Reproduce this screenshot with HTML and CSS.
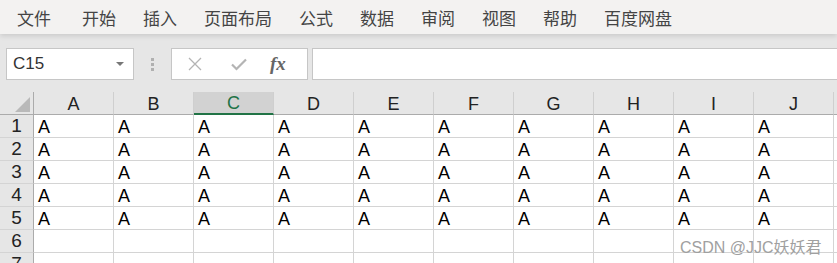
FILE: index.html
```html
<!DOCTYPE html>
<html lang="zh-CN">
<head>
  <meta charset="UTF-8" />
  <title>Excel</title>
  <link rel="stylesheet" href="styles.css">
</head>
<body>
  <div class="menu">
    <span class="menu-item first">文件</span>
    <span class="menu-item">开始</span>
    <span class="menu-item">插入</span>
    <span class="menu-item">页面布局</span>
    <span class="menu-item">公式</span>
    <span class="menu-item">数据</span>
    <span class="menu-item">审阅</span>
    <span class="menu-item">视图</span>
    <span class="menu-item">帮助</span>
    <span class="menu-item">百度网盘</span>
  </div>

  <div class="toolbar">
    <div class="namebox">
      <span>C15</span>
      <span class="caret"></span>
    </div>
    <div class="dots"><i></i><i></i><i></i></div>
    <div class="fbtns">
      <svg class="ico" width="16" height="16" viewBox="0 0 16 16">
        <path d="M2 2 L14 14 M14 2 L2 14" stroke="#b4b4b4" stroke-width="1.3" fill="none" />
      </svg>
      <svg class="ico" width="18" height="16" viewBox="0 0 18 16">
        <path d="M2 8.5 L6.5 13 L16 3.5" stroke="#b4b4b4" stroke-width="2.2" fill="none" />
      </svg>
      <span class="fx">fx</span>
    </div>
    <div class="finput"></div>
  </div>

  <div class="sheet">
    <div class="grid" id="grid"></div>
    <div class="mark">CSDN @JJC妖妖君</div>
  </div>

  <script>
    const grid = document.getElementById('grid');
    const cols = ['A', 'B', 'C', 'D', 'E', 'F', 'G', 'H', 'I', 'J', ''];
    let html = '<div class="hd corner"><span class="tri"></span></div>';
    cols.forEach(c => {
      html += `<div class="hd col${c === 'C' ? ' sel' : ''}">${c}</div>`;
    });
    for (let r = 1; r <= 7; r++) {
      html += `<div class="hd row">${r}</div>`;
      cols.forEach((c, i) => {
        const txt = r <= 5 && i < 10 ? 'A' : '';
        html += `<div class="cell">${txt}</div>`;
      });
    }
    grid.innerHTML = html;
  </script>
</body>
</html>
```

FILE: styles.css
```css
* {
  box-sizing: border-box;
}
body {
  margin: 0;
  width: 837px;
  height: 263px;
  overflow: hidden;
  background: #e6e6e6;
  font-family: "Liberation Sans", "Noto Sans CJK SC", sans-serif;
  color: #000;
}
.menu {
  height: 34px;
  background: #f3f2f1;
  display: flex;
  align-items: center;
  gap: 27px;
  padding-left: 17px;
  font-family: "Noto Sans CJK SC", sans-serif;
  font-size: 17px;
  color: #444;
  position: relative;
  z-index: 1;
  box-shadow: 0 2px 5px rgba(0, 0, 0, 0.12);
}
.menu-item.first {
  margin-right: 4px;
}
.toolbar {
  height: 58px;
  display: flex;
  padding: 14px 0 0 6px;
}
.namebox {
  width: 128px;
  height: 32px;
  background: #fff;
  border: 1px solid #c6c6c6;
  display: flex;
  align-items: center;
  justify-content: space-between;
  padding: 0 9px 0 6px;
  font-size: 17px;
  color: #333;
}
.caret {
  width: 0;
  height: 0;
  border-left: 4px solid transparent;
  border-right: 4px solid transparent;
  border-top: 4px solid #777;
}
.dots {
  width: 37px;
  display: flex;
  flex-direction: column;
  align-items: center;
  justify-content: center;
  gap: 2px;
  height: 32px;
}
.dots i {
  width: 3px;
  height: 3px;
  background: #b0b0b0;
}
.fbtns {
  width: 137px;
  height: 32px;
  background: #fff;
  border: 1px solid #c6c6c6;
  display: flex;
  align-items: center;
  padding-left: 15px;
  gap: 27px;
}
.fx {
  font-family: "Liberation Serif", serif;
  font-style: italic;
  font-weight: bold;
  font-size: 19px;
  color: #666;
  margin-left: -5px;
}
.finput {
  flex: 1;
  height: 32px;
  margin-left: 4px;
  margin-right: -10px;
  background: #fff;
  border: 1px solid #c6c6c6;
}
.sheet {
  position: relative;
}
.grid {
  display: grid;
  grid-template-columns: 34px repeat(11, 80px);
  grid-auto-rows: 23px;
}
.hd {
  background: #e6e6e6;
  color: #222;
  font-size: 18px;
  display: flex;
  align-items: center;
  justify-content: center;
  border-right: 1px solid #cfcfcf;
  border-bottom: 1px solid #c6c6c6;
}
.hd.row {
  font-size: 19px;
  border-right: 1px solid #ababab;
  border-bottom: 1px solid #d4d4d4;
}
.hd.col {
  border-bottom: 1px solid #ababab;
  padding-top: 2px;
}
.hd.sel {
  background: #d2d2d2;
  color: #217346;
  border-bottom: 2px solid #217346;
}
.corner {
  position: relative;
  border-right: 1px solid #ababab;
  border-bottom: 1px solid #ababab;
}
.tri {
  position: absolute;
  right: 3px;
  bottom: 2px;
  width: 0;
  height: 0;
  border-left: 15px solid transparent;
  border-bottom: 15px solid #b9b9b9;
}
.cell {
  background: #fff;
  border-right: 1px solid #d4d4d4;
  border-bottom: 1px solid #d4d4d4;
  font-size: 18px;
  padding: 1px 0 0 4px;
  line-height: 22px;
}
.mark {
  position: absolute;
  left: 680px;
  top: 142px;
  font-size: 16px;
  color: #a0a0a0;
  font-family: "Liberation Sans", "Noto Sans CJK SC", sans-serif;
}
```
